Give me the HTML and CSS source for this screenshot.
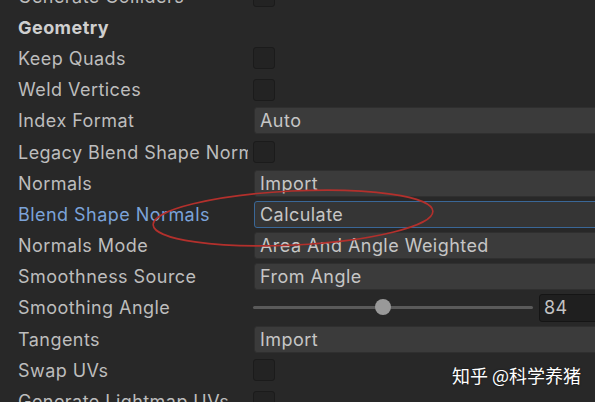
FILE: index.html
```html
<!DOCTYPE html>
<html>
<head>
<meta charset="utf-8">
<link rel="stylesheet" href="styles.css">
</head>
<body>
<div class="panel">
  <div class="row"><div class="label">Generate Colliders</div><div class="check"></div></div>
  <div class="row"><div class="label header">Geometry</div></div>
  <div class="row"><div class="label">Keep Quads</div><div class="check"></div></div>
  <div class="row"><div class="label">Weld Vertices</div><div class="check"></div></div>
  <div class="row"><div class="label">Index Format</div><div class="field">Auto</div></div>
  <div class="row"><div class="label">Legacy Blend Shape Normals</div><div class="check"></div></div>
  <div class="row"><div class="label">Normals</div><div class="field">Import</div></div>
  <div class="row"><div class="label active">Blend Shape Normals</div><div class="field focused">Calculate</div></div>
  <div class="row"><div class="label">Normals Mode</div><div class="field">Area And Angle Weighted</div></div>
  <div class="row"><div class="label">Smoothness Source</div><div class="field">From Angle</div></div>
  <div class="row"><div class="label">Smoothing Angle</div>
    <div class="slider"><div class="track"><div class="thumb"></div></div><div class="num">84</div></div>
  </div>
  <div class="row"><div class="label">Tangents</div><div class="field">Import</div></div>
  <div class="row"><div class="label">Swap UVs</div><div class="check"></div></div>
  <div class="row"><div class="label">Generate Lightmap UVs</div><div class="check"></div></div>
</div>
<svg class="mark" width="595" height="402" viewBox="0 0 595 402">
  <ellipse cx="293" cy="218" rx="140" ry="27" transform="rotate(-2.8 293 218)" fill="none" stroke="#b3302c" stroke-width="1.6"/>
</svg>
<div class="watermark">知乎 @科学养猪</div>
</body>
</html>
```
FILE: styles.css
```css
html, body {
  margin: 0;
  padding: 0;
  background: #282828;
  overflow: hidden;
  width: 595px;
  height: 402px;
}
body {
  position: relative;
  font-family: Inter, "Noto Sans", sans-serif;
  font-size: 18px;
  letter-spacing: 0.45px;
  color: #bdbdbd;
}
.panel {
  margin-top: -19.5px;
  display: flex;
  flex-direction: column;
}
.row {
  height: 31.2px;
  display: flex;
  align-items: center;
  flex: none;
}
.label {
  width: 230px;
  margin-left: 18px;
  margin-right: 5px;
  white-space: nowrap;
  overflow: hidden;
  flex: none;
}
.label.header {
  font-weight: 700;
  color: #cfcfcf;
}
.label.active {
  color: #7ba3d9;
}
.check {
  width: 20px;
  height: 20px;
  background: #232323;
  border: 1px solid #1b1b1b;
  border-radius: 3px;
  flex: none;
}
.field {
  flex: none;
  width: 400px;
  height: 27px;
  box-sizing: border-box;
  background: #3b3b3b;
  border: 1px solid #2f2f2f;
  border-radius: 3px;
  padding-left: 5px;
  line-height: 25px;
  color: #c6c6c6;
  margin-left: 1px;
}
.field.focused {
  background: #353535;
  border-color: #3a6797;
}
.slider {
  display: flex;
  align-items: center;
  flex: none;
}
.track {
  position: relative;
  width: 280px;
  height: 3px;
  background: #5a5a5a;
  border-radius: 2px;
  margin-left: 0;
}
.thumb {
  position: absolute;
  left: 122px;
  top: -7px;
  width: 16px;
  height: 16px;
  border-radius: 50%;
  background: #999999;
}
.num {
  margin-left: 6px;
  width: 120px;
  height: 28px;
  box-sizing: border-box;
  background: #1f1f1f;
  border: 1px solid #151515;
  border-radius: 3px;
  padding-left: 4px;
  line-height: 26px;
  color: #c3c3c3;
}
.mark {
  position: absolute;
  left: 0;
  top: 0;
  pointer-events: none;
}
.watermark {
  position: absolute;
  left: 452px;
  top: 362px;
  font-family: "Noto Sans CJK SC", sans-serif;
  font-size: 18px;
  letter-spacing: 0;
  color: #ffffff;
  text-shadow: 0 0 2px rgba(0,0,0,0.6);
  white-space: nowrap;
}
```
